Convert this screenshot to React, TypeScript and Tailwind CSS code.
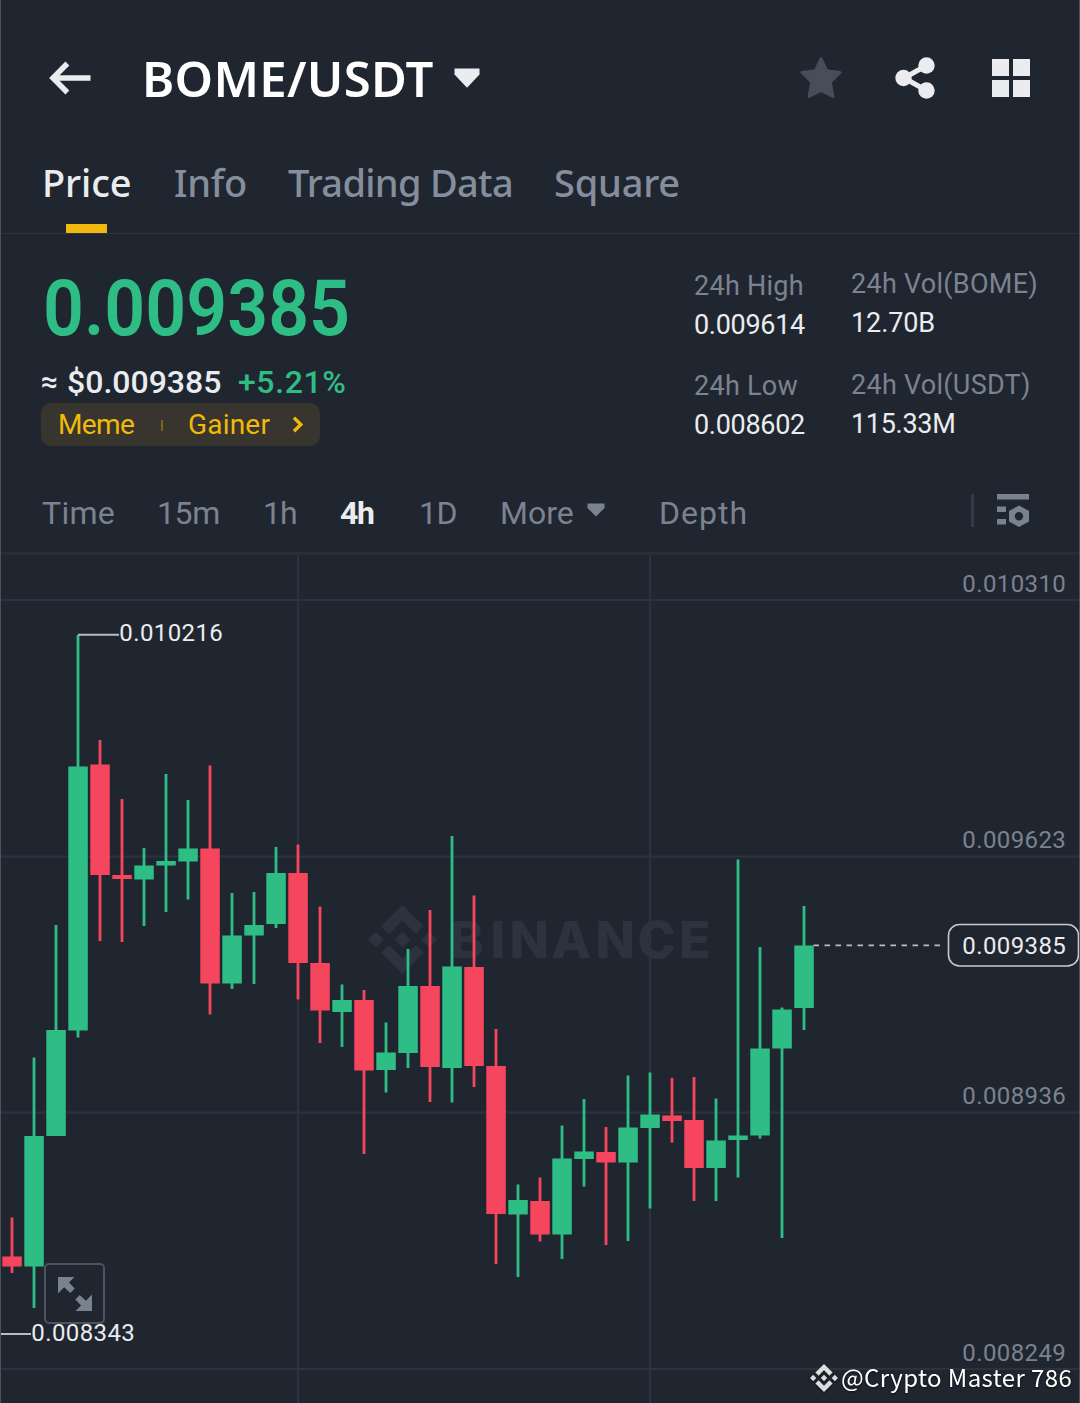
import React from 'react';

type Candle = [bodyTop: number, bodyBottom: number, high: number, low: number, up: 0 | 1];

const CANDLES: Candle[] = [
  [1256.5, 1266.5, 1217.5, 1273, 0],
  [1136, 1266.5, 1057.5, 1308, 1],
  [1030, 1136, 925, 1136, 1],
  [766.5, 1030.5, 635, 1037.5, 1],
  [764.5, 875, 740, 941, 0],
  [875, 879, 799, 942, 0],
  [865.5, 879.5, 848, 926, 1],
  [861, 865.5, 774, 912, 1],
  [848.5, 861.5, 800, 899.5, 1],
  [848.5, 983.5, 765.5, 1014.5, 0],
  [935.5, 983.5, 893, 989, 1],
  [925, 935.5, 892, 984, 1],
  [873, 924, 847, 928, 1],
  [873, 963, 844.5, 999.5, 0],
  [963, 1010.5, 906.5, 1043, 0],
  [1000, 1012, 984.5, 1047, 1],
  [1000, 1070.5, 990, 1154, 0],
  [1052.5, 1070, 1022.5, 1092.5, 1],
  [986, 1053, 949, 1068, 1],
  [986, 1067, 910, 1102, 0],
  [966.5, 1068, 836, 1102.5, 1],
  [967, 1066, 895.5, 1087, 0],
  [1066, 1214, 1029, 1264, 0],
  [1200, 1214.5, 1184.5, 1277, 1],
  [1201, 1234.5, 1177.5, 1241.5, 0],
  [1158.5, 1234.5, 1125.5, 1259, 1],
  [1151.5, 1159, 1099, 1186.5, 1],
  [1152, 1162.5, 1127, 1245, 0],
  [1127.5, 1162.5, 1075.5, 1241, 1],
  [1114.5, 1128, 1072.5, 1208.5, 1],
  [1115.5, 1121, 1078, 1142.5, 0],
  [1120, 1168, 1077, 1201, 0],
  [1140.5, 1168, 1098.5, 1201, 1],
  [1135.5, 1140, 859.5, 1177.5, 1],
  [1048.5, 1135.5, 947, 1138.5, 1],
  [1009.5, 1048.5, 1007.5, 1238, 1],
  [945.5, 1008, 906, 1030, 1],
];

const AXIS = [
  { y: 600, label: '0.010310' },
  { y: 856.5, label: '0.009623' },
  { y: 1112.5, label: '0.008936' },
  { y: 1369, label: '0.008249' },
];

function BinanceMark({ className }: { className?: string }) {
  return (
    <svg viewBox="0 0 126.61 126.61" className={className} fill="currentColor">
      <path d="M38.73 53.2l24.59-24.58 24.6 24.6 14.3-14.31L63.32 0 24.42 38.9z" />
      <path d="M0 63.31L14.3 49l14.31 14.31-14.31 14.3z" />
      <path d="M38.73 73.41l24.59 24.59 24.6-24.6 14.31 14.29-38.91 38.92-38.91-38.9z" />
      <path d="M98 63.31L112.3 49l14.31 14.3-14.31 14.31z" />
      <path d="M77.83 63.3L63.32 48.78 48.79 63.3l14.53 14.52z" />
    </svg>
  );
}

function Header() {
  return (
    <header className="flex h-[156px] shrink-0 items-center pl-[49px] pr-[50px]">
      <svg viewBox="0 0 42 34" className="h-[34px] w-[42px]" fill="none" stroke="#eaecef" strokeWidth="5.500">
        <path d="M18.4 2.5L4 17l14.4 14.5M4 17h37.500" />
      </svg>
      <h1 className="ml-[51px] font-['Noto_Sans'] text-[49px] font-semibold leading-[60px] tracking-[0.3px] text-white">
        BOME/USDT
      </h1>
      <svg viewBox="0 0 26 20" className="ml-[20px] h-5 w-[26px]" fill="#eaecef">
        <path d="M0.5 0.5h25v6L13 19.8 0.5 6.500z" />
      </svg>
      <div className="ml-auto flex items-center">
        <svg viewBox="0 0 42 42" className="h-[42px] w-[42px]" fill="#474d59" stroke="#474d59" strokeWidth="3" strokeLinejoin="round">
          <path d="M21 1.8l5.700 12 13.200 1.700-9.600 9.500 2.600 14.400L21 33.300 9.100 39.400l2.600-14.400L2 15.500l13.300-1.700z" />
        </svg>
        <svg viewBox="0 0 40 42" className="ml-[53px] h-[42px] w-10" fill="#eaecef">
          <path d="M31.500 8.500L9 21l22.500 12.500" fill="none" stroke="#eaecef" strokeWidth="5" />
          <circle cx="31.500" cy="8.500" r="8.200" />
          <circle cx="8.500" cy="21" r="8.200" />
          <circle cx="31.500" cy="33.500" r="8.200" />
        </svg>
        <div className="ml-[57px] grid grid-cols-2 gap-1">
          <i className="size-[17px] bg-[#eaecef]" />
          <i className="size-[17px] bg-[#eaecef]" />
          <i className="size-[17px] bg-[#eaecef]" />
          <i className="size-[17px] bg-[#eaecef]" />
        </div>
      </div>
    </header>
  );
}

function Tabs() {
  return (
    <nav className="flex h-[78px] shrink-0 border-b border-[#2e343f] pl-[42px] font-['Noto_Sans'] text-[38px] font-medium leading-[52px] text-[#848e9c]">
      <div className="relative w-[132px] tracking-[-0.1px] text-[#eaecef]">
        Price
        <span className="absolute bottom-0 left-6 h-[9px] w-[41px] bg-[#f0b90b]" />
      </div>
      <div className="w-[114px] tracking-[-0.3px]">Info</div>
      <div className="w-[266px] tracking-[-0.7px]">Trading Data</div>
      <div className="tracking-[-0.2px]">Square</div>
    </nav>
  );
}

function Stat({ label, value, tight }: { label: string; value: string; tight?: boolean }) {
  return (
    <div className="text-[27px] leading-[38px]">
      <div className="tracking-[0.27px] text-[#7b8290]">{label}</div>
      <div
        className={
          tight
            ? 'relative top-px font-[450] tracking-[-0.3px] text-[#eaecef]'
            : 'relative top-px font-[450] tracking-[-0.1px] text-[#eaecef]'
        }
      >
        {value}
      </div>
    </div>
  );
}

function Summary() {
  return (
    <section className="flex h-[240px] shrink-0 pl-[41px] pt-[35px]">
      <div className="w-[653px]">
        <div className="ml-[2px] origin-left scale-x-[0.931] text-[77px] font-semibold leading-[80px] text-[#2ebd85]">0.009385</div>
        <div className="mt-[13px] flex h-[41px] text-[32px] font-medium leading-10">
          <span className="w-[26px] text-[30px] text-[#eaecef]">≈</span>
          <span className="w-[171px] text-[#eaecef]">$0.009385</span>
          <span className="tracking-[0.6px] text-[#2ebd85]">+5.21%</span>
        </div>
        <div className="flex h-[43px] w-[279px] items-center rounded-[10px] bg-[#37352d] pl-[17px] pt-px text-[28px] text-[#f0b90b]">
          <span className="w-[103px] tracking-[-0.6px]">Meme</span>
          <span className="h-[11px] w-[2px] bg-[#806517]" />
          <span className="ml-[25px] w-[104px] tracking-[0.2px]">Gainer</span>
          <svg viewBox="0 0 12 17" className="mb-px h-[17px] w-3" fill="none" stroke="#f0b90b" strokeWidth="3.400">
            <path d="M2 1.800l6.800 6.700L2 15.200" />
          </svg>
        </div>
      </div>
      <div className="-mt-[2px] flex w-[157px] flex-col gap-6">
        <Stat label="24h High" value="0.009614" tight />
        <Stat label="24h Low" value="0.008602" tight />
      </div>
      <div className="-mt-1 flex flex-col gap-[25px]">
        <Stat label="24h Vol(BOME)" value="12.70B" />
        <Stat label="24h Vol(USDT)" value="115.33M" tight />
      </div>
    </section>
  );
}

function Timeframes() {
  return (
    <div className="flex h-[81px] shrink-0 items-center border-b-[3px] border-[#282e38] pb-px pl-[42px] pr-[51px] text-[32px] text-[#7b8290]">
      <span className="w-[115px] tracking-[0.3px]">Time</span>
      <span className="w-[106px] tracking-[-0.4px]">15m</span>
      <span className="w-[77px] tracking-[-1px]">1h</span>
      <span className="w-[79px] pt-px font-bold tracking-[-1.3px] text-[#eaecef]">4h</span>
      <span className="w-[81px] tracking-[-0.6px]">1D</span>
      <span className="w-[87px]">More</span>
      <svg viewBox="0 0 18 14" className="mb-[5px] h-[14px] w-[18px]" fill="#788290">
        <path d="M0.500 0.500h17v4.500L9 13.500 0.500 5z" />
      </svg>
      <span className="ml-[54px] tracking-[1px]">Depth</span>
      <span className="mb-1 ml-auto h-[33px] w-[3px] bg-[#343a45]" />
      <svg viewBox="0 0 32 33" className="mb-1 ml-[23px] h-[33px] w-8" fill="#788290">
        <path d="M0 0h32v5.500H0zM0 12.500h9v5.500H0zM0 25h9v5.500H0z" />
        <path fillRule="evenodd" d="M22 11.500l10 5.500v10.500L22 33l-10-5.500V17zM22 18a4.200 4.200 0 100 8.400 4.200 4.200 0 000-8.400z" />
      </svg>
    </div>
  );
}

function Chart() {
  return (
    <div className="relative h-[848px] shrink-0">
      <svg viewBox="0 555 1080 848" className="block h-[848px] w-[1080px] font-[Roboto]">
        <g fill="#2d333e">
          <rect x="297" y="555" width="2" height="848" />
          <rect x="649" y="555" width="2" height="848" />
          {AXIS.map((a) => (
            <rect key={a.label} x="0" y={a.y - 1} width="1080" height="2" />
          ))}
        </g>
        <g fontSize="24" letterSpacing="0.4" fill="#7b8290">
          {AXIS.map((a) => (
            <text key={a.label} x="962.300" y={a.y - 8.500}>
              {a.label}
            </text>
          ))}
        </g>
        <g fill="#2d333e">
          <svg x="368" y="905" width="69" height="69" viewBox="0 0 126.61 126.61">
            <path d="M38.73 53.2l24.59-24.58 24.6 24.6 14.3-14.31L63.32 0 24.42 38.9z" />
            <path d="M0 63.31L14.3 49l14.31 14.31-14.31 14.3z" />
            <path d="M38.73 73.41l24.59 24.59 24.6-24.6 14.31 14.29-38.91 38.92-38.91-38.9z" />
            <path d="M98 63.31L112.3 49l14.31 14.3-14.31 14.31z" />
            <path d="M77.83 63.3L63.32 48.78 48.79 63.3l14.53 14.52z" />
          </svg>
          <text x="449.500 490.500 509.500 551.500 595.500 637.500 679" y="958" fontSize="51.500" fontWeight="800" className="font-[Inter]">
            BINANCE
          </text>
        </g>
        {CANDLES.map(([top, bottom, high, low, up], i) => (
          <g key={i} fill={up ? '#2ebd85' : '#f6465d'}>
            <rect x={10.600 + 22 * i} y={high} width="2.800" height={low - high} />
            <rect x={2.300 + 22 * i} y={top} width="19.500" height={bottom - top} />
          </g>
        ))}
        <path d="M78 634.700h41M0 1334h31" stroke="#b7bdc6" strokeWidth="2" />
        <g fontSize="24" letterSpacing="0.4" fill="#eaecef">
          <text x="119.300" y="641.300">0.010216</text>
          <text x="31.300" y="1341.300">0.008343</text>
        </g>
        <path d="M813.500 945.300h127" stroke="#b7bdc6" strokeWidth="1.700" strokeDasharray="5.500 5.500" />
        <rect x="948.500" y="924.500" width="130" height="41.500" rx="11" fill="#202630" stroke="#c5cad2" strokeWidth="1.600" />
        <text x="962.300" y="954.300" fontSize="24" letterSpacing="0.4" fill="#eaecef">
          0.009385
        </text>
      </svg>
      <button className="absolute left-[44px] top-[708px] flex size-[61px] items-center justify-center rounded-[5px] border-2 border-[#4d5460] bg-[#202630]">
        <svg viewBox="0 0 34 34" className="size-[34px]" fill="#788290">
          <path d="M0 0h16.500l-5.600 5.600 5.800 6-4.400 4.400-6.200-5.800L0 16.500zM34 34H17.500l5.600-5.600-5.800-6 4.400-4.400 6.200 5.800 6.100-6.300z" />
        </svg>
      </button>
      <div className="absolute left-[810px] top-[808px] flex items-center text-white drop-shadow-[0_1px_1px_rgba(0,0,0,0.6)]">
        <BinanceMark className="size-7 text-[#dcdddf]" />
        <span className="-mt-[2px] ml-[3px] whitespace-nowrap font-['Noto_Sans_CJK_SC'] text-[24px] leading-8 tracking-[0.4px]">
          @Crypto Master 786
        </span>
      </div>
    </div>
  );
}

export default function App() {
  return (
    <main className="relative flex h-[1403px] w-[1080px] flex-col overflow-hidden bg-[#202630] font-[Roboto,sans-serif]">
      <Header />
      <Tabs />
      <Summary />
      <Timeframes />
      <Chart />
      <div className="pointer-events-none absolute inset-0 border-x border-[#4b515c]" />
    </main>
  );
}
